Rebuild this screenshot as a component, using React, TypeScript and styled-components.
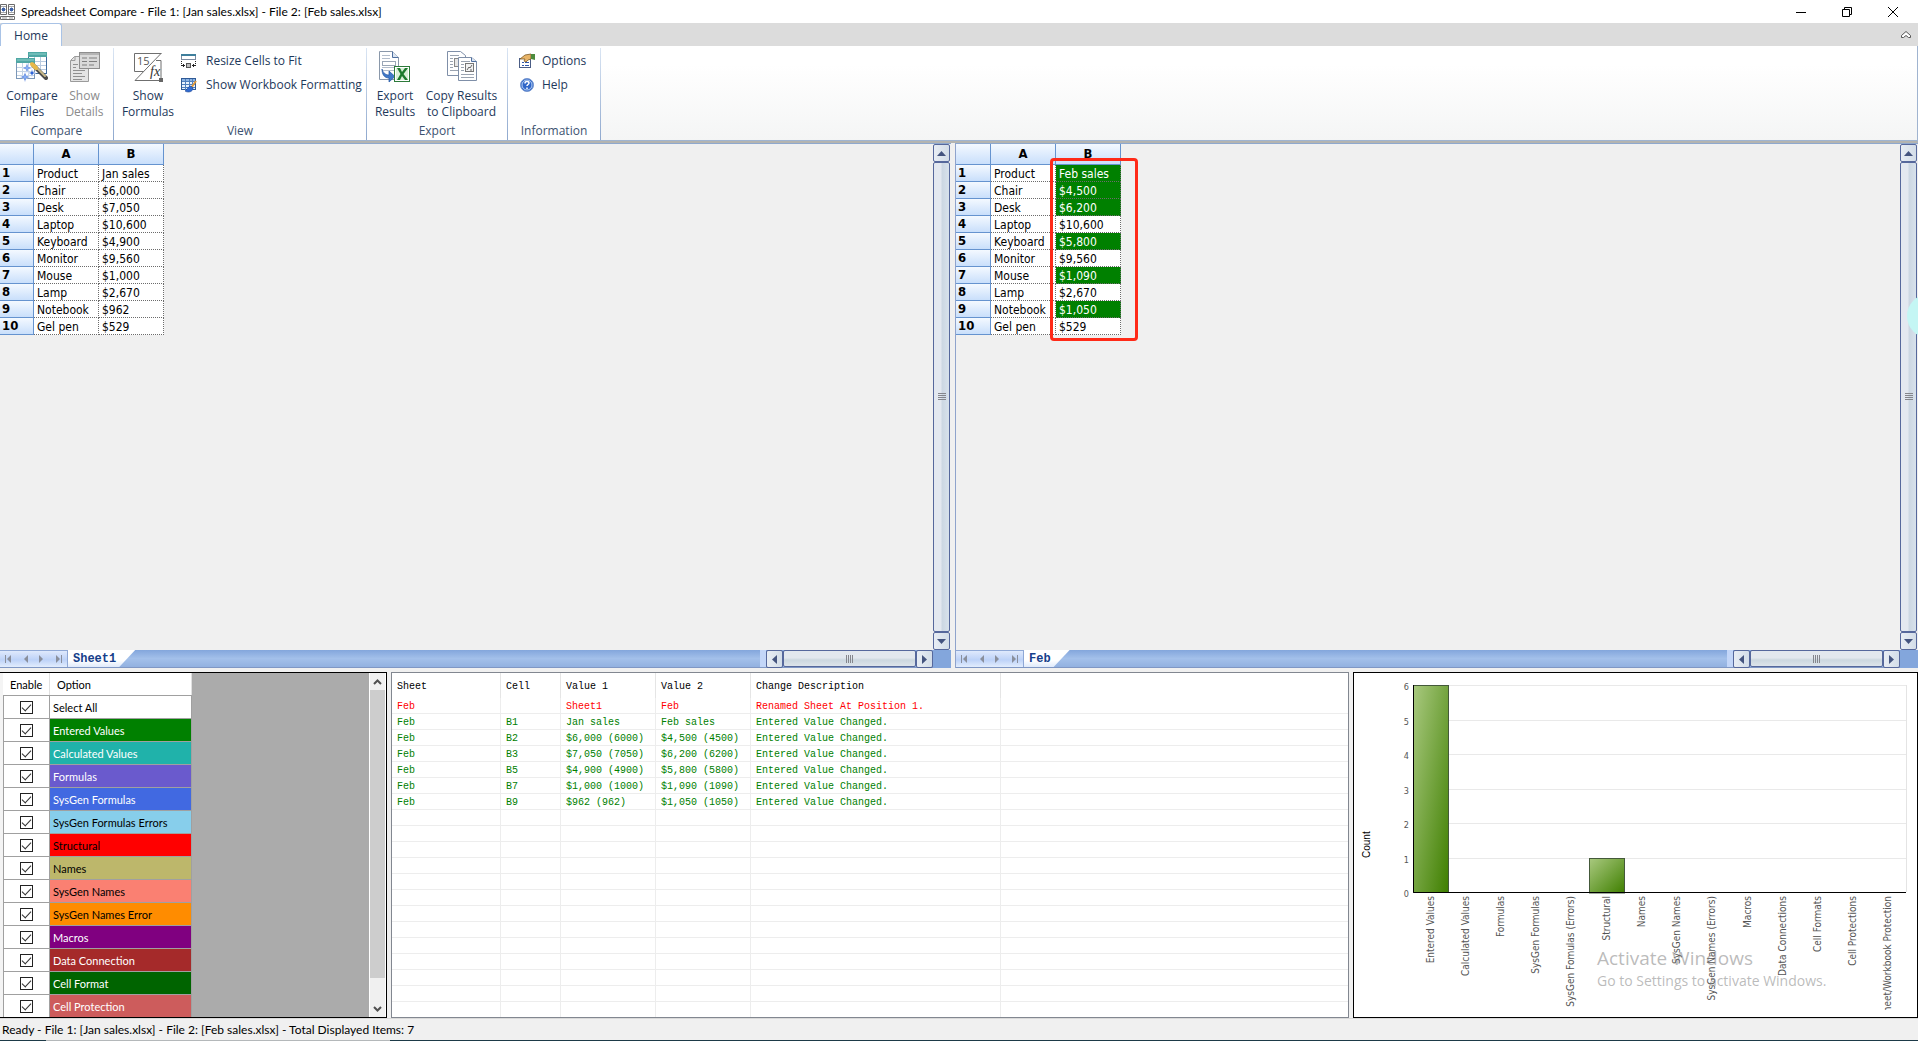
import React from "react";
import styled, { createGlobalStyle, css } from "styled-components";

const UI = `"Open Sans", "Noto Sans", sans-serif`;
const CAPTION = `Lato, "Open Sans", sans-serif`;
const GRID = `"DejaVu Sans Condensed", "DejaVu Sans", sans-serif`;
const MONO = `"Liberation Mono", monospace`;
const FORM = `Lato, "Liberation Sans", sans-serif`;

const GlobalStyle = createGlobalStyle`
  *, *::before, *::after { box-sizing: border-box; }
  body { margin: 0; background: #f0f0f0; font-family: ${UI}; font-size: 12px; color: #000; }
  button { font: inherit; color: inherit; background: none; border: 0; padding: 0; margin: 0; }
  svg { display: block; }
`;

const Window = styled.div`
  position: relative;
  display: flex;
  flex-direction: column;
  height: 100vh;
  overflow: hidden;
`;

/* ---------- title bar ---------- */
const TitleBar = styled.header`
  flex: none;
  display: flex;
  align-items: center;
  height: 23px;
  background: #fff;
`;
const Title = styled.h1`
  flex: 1;
  margin: 0;
  padding-left: 6px;
  font-family: ${CAPTION};
  font-size: 12px;
  font-weight: 400;
  line-height: 24px;
  white-space: nowrap;
`;
const WindowButtons = styled.div`
  display: flex;
  padding-right: 2px;
`;
const WindowButton = styled.button`
  display: grid;
  place-items: center;
  width: 46px;
  height: 20px;
`;

/* ---------- ribbon ---------- */
const TabStrip = styled.nav`
  flex: none;
  display: flex;
  justify-content: space-between;
  height: 24px;
  margin-bottom: -1px;
  background: #dcdcdc;
  border-bottom: 1px solid #a0b4d0;
`;
const RibbonTab = styled.button`
  width: 62px;
  height: 24px;
  background: #fff;
  border: 1px solid #a9c3e6;
  border-bottom: 0;
  border-radius: 3px 3px 0 0;
  color: #1e395b;
  line-height: 24px;
`;
const CollapseButton = styled.button`
  display: grid;
  place-items: center;
  width: 25px;
`;
const Ribbon = styled.section`
  flex: none;
  display: flex;
  height: 97px;
  padding-top: 2px;
  background: linear-gradient(#fff 20%, #f4f5f5);
  border-right: 1px solid #a0b4d0;
  border-bottom: 2px solid #b4b4b0;
  box-shadow: inset 0 -1px #a0b4d0;
`;
const Group = styled.div<{ $width: number }>`
  display: flex;
  flex-direction: column;
  width: ${(p) => p.$width}px;
  height: 92px;
  background: #fff;
  border-right: 1px solid;
  border-image: linear-gradient(#dbe6f4, #8ea8ce) 1;
  color: #1e395b;
`;
const GroupBody = styled.div<{ $pad: number }>`
  flex: 1;
  display: flex;
  align-items: flex-start;
  padding: 3px 0 0 ${(p) => p.$pad}px;
`;
const GroupLabel = styled.div`
  height: 18px;
  color: #3c5270;
  line-height: 18px;
  text-align: center;
`;
const BigButton = styled.button<{ $width: number }>`
  display: flex;
  flex-direction: column;
  align-items: center;
  gap: 5px;
  width: ${(p) => p.$width}px;
  line-height: 16px;
  white-space: nowrap;
  &:disabled { color: #8b8b8b; }
`;
const SmallList = styled.div`
  display: flex;
  flex-direction: column;
`;
const SmallButton = styled.button<{ $gap: number }>`
  display: flex;
  align-items: center;
  gap: ${(p) => p.$gap}px;
  height: 24px;
  padding-bottom: 5px;
  white-space: nowrap;
`;

/* ---------- workbook panes ---------- */
const Panes = styled.main`
  flex: 525 1 0;
  display: grid;
  grid-template-columns: 951fr 963fr;
  gap: 4px;
  min-height: 0;
`;
const Pane = styled.section<{ $edge?: boolean }>`
  display: grid;
  grid-template-columns: minmax(0, 1fr) 18px;
  grid-template-rows: minmax(0, 1fr) 18px;
  min-width: 0;
  border-top: 1px solid #8ea8ce;
  ${(p) => p.$edge && css`border-left: 1px solid #8fa3cc;`}
`;
const SheetArea = styled.div`
  position: relative;
  overflow: hidden;
`;
const Sheet = styled.table`
  table-layout: fixed;
  width: 0;
  border-spacing: 0;
  background: #fff;
  font-family: ${GRID};
  font-size: 12px;
`;
const HeadCell = styled.th<{ $width: number }>`
  width: ${(p) => p.$width}px;
  height: 21px;
  padding: 0;
  background: linear-gradient(#f4f9ff, #c9dffb);
  border: solid #6593cf;
  border-width: 0 1px 1px 0;
  font-size: 13px;
  line-height: 20px;
`;
const RowHead = styled.th`
  height: 17px;
  padding: 0 0 0 2px;
  background: linear-gradient(#f4f9ff, #c9dffb);
  border: solid #6593cf;
  border-width: 0 1px 1px 0;
  font-size: 13px;
  line-height: 16px;
  text-align: left;
`;
const Cell = styled.td<{ $changed?: boolean }>`
  height: 17px;
  padding: 2px 0 0 3px;
  border: dotted #6c6c6c;
  border-width: 0 1px 1px 0;
  line-height: 14px;
  white-space: nowrap;
  ${(p) => p.$changed && css`background: #008000; color: #fff;`}
`;
const RedFrame = styled.div`
  position: absolute;
  top: 14px;
  left: 94px;
  width: 88px;
  height: 183px;
  border: 3px solid #ff2a18;
  border-radius: 4px;
`;

const ScrollColumn = styled.div`
  display: flex;
  flex-direction: column;
`;
const scrollPiece = css`
  display: grid;
  place-items: center;
  border: 1px solid #56689c;
  border-radius: 2px;
`;
const ScrollButton = styled.button`
  ${scrollPiece}
  width: 17px;
  height: 18px;
  background: linear-gradient(90deg, #e8edf4, #d3dde8);
`;
const VerticalThumb = styled.div`
  ${scrollPiece}
  flex: 1;
  width: 17px;
  background: linear-gradient(90deg, #e3e8f0 45%, #ccd7e3 55%, #d8e2ec);
`;
const HorizontalThumb = styled.div`
  ${scrollPiece}
  flex: 1;
  background: linear-gradient(#e3e8ee 45%, #ccd7df 60%, #dde4ea);
`;
const TabBar = styled.div`
  display: flex;
  background: linear-gradient(#83a6dc, #a3c0ea 50%, #92b1e0);
  border-bottom: 1px solid #7f97c4;
`;
const TabNav = styled.div`
  display: flex;
  width: 68px;
  background: linear-gradient(#dfe9fc, #bdd2f8 55%, #e2edfd);
  border: solid #8fa8d6;
  border-width: 1px 1px 0 0;
`;
const NavButton = styled.button`
  flex: 1;
  display: grid;
  place-items: center;
`;
const SheetTab = styled.button`
  padding: 0 19px 0 5px;
  background: linear-gradient(#fff 60%, #dfeafb);
  clip-path: polygon(0 0, 100% 0, calc(100% - 16px) 100%, 0 100%);
  color: #153e8a;
  font-family: ${MONO};
  font-size: 12px;
  font-weight: 700;
  line-height: 16px;
`;
const HorizontalScroll = styled.div`
  display: flex;
  width: 173px;
  margin-left: auto;
  border-left: 6px solid #c3d6f8;
`;
const Corner = styled.div`
  background: #83a6dc;
`;

/* ---------- lower panels ---------- */
const Lower = styled.section`
  flex: 346 1 0;
  display: grid;
  grid-template-columns: 387fr 958fr 565fr;
  gap: 4px;
  min-height: 0;
  margin-top: 4px;
`;
const OptionsPanel = styled.div`
  display: flex;
  min-width: 0;
  overflow: hidden;
  background: #ababab;
  border: 1px solid #000;
  border-left: 0;
`;
const OptionsScroll = styled.div`
  flex: 1;
  overflow: hidden;
`;
const OptionsTable = styled.table`
  table-layout: fixed;
  width: 192px;
  border-spacing: 0;
  background: #fff;
  border-left: 3px solid #f4f4f4;
  font-family: ${FORM};
  font-size: 11px;
`;
const OptionsHead = styled.th<{ $width: number }>`
  width: ${(p) => p.$width}px;
  height: 23px;
  padding: 0 7px;
  border: solid #a0a0a0;
  border-width: 0 0 1px 0;
  box-shadow: inset -1px 0 #e0e0e0;
  font-weight: 400;
  text-align: left;
`;
const TickCell = styled.td`
  height: 23px;
  padding: 0;
  border: solid #a0a0a0;
  border-width: 0 1px 1px 1px;
`;
const OptionCell = styled.td<{ $bg: string; $fg: string }>`
  padding: 0 0 0 3px;
  background: ${(p) => p.$bg};
  border: solid #a0a0a0;
  border-width: 0 1px 1px 0;
  color: ${(p) => p.$fg};
  label { display: block; }
`;
const Tick = styled.input`
  appearance: none;
  display: grid;
  place-items: center;
  width: 13px;
  height: 13px;
  margin: 0 auto;
  background: #fff;
  border: 1px solid #222;
  &:checked::after {
    content: "";
    width: 9px;
    height: 5px;
    margin-top: -2px;
    border: solid #333;
    border-width: 0 0 1px 1px;
    transform: rotate(-47deg);
  }
`;
const PlainScroll = styled.div`
  display: flex;
  flex-direction: column;
  width: 17px;
  background: #f0f0f0;
  border: solid #fff;
  border-width: 0 1px;
`;
const PlainScrollButton = styled.button`
  display: grid;
  place-items: center;
  height: 17px;
`;
const PlainThumb = styled.div`
  flex: 1;
  margin-bottom: 22px;
  background: #cdcdcd;
`;

const ResultsPanel = styled.div`
  min-width: 0;
  overflow: hidden;
  background: #fff;
  border: 1px solid #828790;
`;
const Results = styled.table`
  table-layout: fixed;
  width: 100%;
  border-spacing: 0;
  font-family: ${MONO};
  font-size: 10px;
  white-space: pre;
`;
const ResultsHead = styled.th<{ $width?: number }>`
  ${(p) => p.$width && css`width: ${p.$width}px;`}
  height: 25px;
  padding: 2px 0 0 5px;
  border-right: 1px solid #e5e5e5;
  font-weight: 400;
  text-align: left;
  &:last-child { border-right: 0; }
`;
const ResultsCell = styled.td`
  height: 16px;
  padding: 2px 0 0 5px;
  border: solid #ededed;
  border-width: 0 1px 1px 0;
  line-height: 13px;
  &:last-child { border-right: 0; }
`;
const ResultsRow = styled.tr<{ $color: string }>`
  color: ${(p) => p.$color};
`;

const ChartPanel = styled.div`
  position: relative;
  min-width: 0;
  background: #fff;
  border: 1px solid #000;
  svg { width: 100%; height: 100%; }
`;
const Watermark = styled.div`
  position: absolute;
  left: 243px;
  top: 272px;
  color: rgba(120, 120, 120, 0.5);
  white-space: nowrap;
  p { margin: 0; }
  p:first-child { font-size: 19px; line-height: 26px; }
  p:last-child { font-size: 14px; line-height: 20px; }
`;

const StatusBar = styled.footer`
  flex: none;
  height: 22px;
  padding: 0 2px;
  border-top: 1px solid #dadada;
  font-family: ${CAPTION};
  line-height: 22px;
  white-space: nowrap;
`;
const DesktopEdge = styled.div`
  flex: none;
  height: 1px;
  background: linear-gradient(90deg, #1d3a48 46px, #b4b8ba 46px 390px, #1d3a48 390px);
`;
const Bubble = styled.div`
  position: absolute;
  top: 294px;
  right: -33px;
  width: 44px;
  height: 44px;
  background: #c4f6f4;
  border-radius: 50%;
`;

/* ---------- icons ---------- */
const AppIcon = () => (
  <svg width="15" height="16" viewBox="0 0 15 16">
    <path d="M.5 .5h6v10h-6zM8.500 .5h6v10h-6zM.5 12.500h14v3h-14z" fill="#fff" stroke="#6b6b6b" />
    <path d="M1 2.500h5M1 8.500h5M9 2.500h5M9 8.500h5" stroke="#aaa" />
    <path d="M1.500 5.500h4M3.500 3.500v4M2 4l3 3M5 4l-3 3M9.500 5.500h4M11.500 3.500v4M10 4l3 3M13 4l-3 3" stroke="#3d62a8" />
    <path d="M2 14h5M9 14h4" stroke="#999" />
  </svg>
);

const CompareIcon = () => (
  <svg width="32" height="32" viewBox="0 0 32 32">
    <rect x="12.500" y="1.500" width="18" height="21" fill="#fff" stroke="#3f6a9c" />
    <rect x="12" y="1" width="19" height="5" fill="#4fa7a4" />
    <path d="M13 3h17" stroke="#8fd0cb" />
    <path d="M13 10.500h17M13 14.500h17M13 18.500h17M18.500 6v16M24.500 6v16" stroke="#b9cbe0" />
    <rect x=".5" y="7.500" width="18" height="20" fill="#fff" stroke="#7b97b8" />
    <rect x="0" y="7" width="19" height="5" fill="#4fa7a4" />
    <path d="M1 9h17" stroke="#8fd0cb" />
    <path d="M1 16.500h17M1 20.500h17M1 24.500h17M6.500 12v15M12.500 12v15" stroke="#c3d2e3" />
    <path d="M17 14l13 13" stroke="#4a4a4a" strokeWidth="4" strokeLinecap="round" />
    <path d="M17 13l12 12" stroke="#c7b888" strokeWidth="2" strokeLinecap="round" />
    <path d="M16 13l4 4" stroke="#e7b94a" strokeWidth="4" strokeLinecap="round" />
    <path d="M11 12l1.200 3.800 3.800 1.200-3.800 1.200L11 22l-1.200-3.800L6 17l3.800-1.200zM16 18l1 3 3 1-3 1-1 3-1-3-3-1 3-1zM9 21l1.300 3.700L14 26l-3.700 1.300L9 31l-1.300-3.700L4 26l3.700-1.300z" fill="#2f66d8" stroke="#fff" strokeWidth=".5" />
    <path d="M11 15v4M9 17h4M9 24v4M7 26h4" stroke="#a9c8fb" />
  </svg>
);

const DetailsIcon = () => (
  <svg width="32" height="32" viewBox="0 0 32 32">
    <path d="M1.500 9.500l4-4h14v25h-18z" fill="#e4e4e4" stroke="#9b9b9b" />
    <path d="M4 13.500h5M4 16.500h3M4 19.500h12M4 22.500h9M4 25.500h12M4 28.500h9" stroke="#8f8f8f" />
    <rect x="10.500" y="1.500" width="20" height="16" fill="#dadada" stroke="#8e8e8e" />
    <path d="M11 3h19" stroke="#b5b5b5" strokeWidth="2" />
    <path d="M13 7h5M20 7h8M13 10.500h5M20 10.500h8M13 14h5M20 14h5" stroke="#7f7f7f" />
    <path d="M2 9.500h4v-4" fill="none" stroke="#9b9b9b" />
  </svg>
);

const FormulasIcon = () => (
  <svg width="32" height="32" viewBox="0 0 32 32">
    <path d="M29.500 2.500h-27v18h9M29 2.500L3 29.500h26v-20h-5" fill="none" stroke="#6f6f6f" />
    <text x="5" y="14" fontFamily="Open Sans" fontSize="11" fill="#555">15</text>
    <text x="18" y="25" fontFamily="Liberation Serif" fontStyle="italic" fontSize="14" fill="#333">fx</text>
    <rect x="27" y="27" width="4" height="4" fill="#666" />
  </svg>
);

const ResizeIcon = () => (
  <svg width="16" height="16" viewBox="0 0 16 16">
    <rect x=".5" y="1.500" width="14" height="5" fill="#fff" stroke="#7b8aa0" />
    <path d="M0 2h15" stroke="#3f7f9c" strokeWidth="2" />
    <path d="M.5 8v6M14.500 8v6" stroke="#222" strokeDasharray="1 1" />
    <path d="M1 12.500h3M11 12.500h3M2.500 11v3M12.500 11v3" stroke="#222" />
    <rect x="5.500" y="10.500" width="4" height="4" fill="#bbb" stroke="#555" />
  </svg>
);

const FormattingIcon = () => (
  <svg width="16" height="16" viewBox="0 0 16 16">
    <rect x=".5" y="1.500" width="14" height="11" fill="#e9f2fd" stroke="#2f5a96" />
    <path d="M1 3h13" stroke="#8db4e3" strokeWidth="2" />
    <path d="M1 4.500h13M1 7.500h13M1 10.500h13M4.500 2v11M8.500 2v11M11.500 2v11" stroke="#4f7fbd" />
    <path d="M15 4l-5 7" stroke="#e09a3c" strokeWidth="2" />
    <path d="M10 9c-3 0-3 3-6 5 3 2 8 1 8-3z" fill="#2f6ad0" stroke="#1c4590" strokeWidth=".6" />
  </svg>
);

const ExportIcon = () => (
  <svg width="32" height="32" viewBox="0 0 32 32">
    <path d="M.5 .5h13l6 6v22h-19z" fill="#fff" stroke="#8a98aa" />
    <path d="M13.500 .5v6h6" fill="#dbe5f2" stroke="#4f6f9f" />
    <path d="M3 4.500h8M3 7.500h8M3 16.500h13M3 19.500h13" stroke="#b3bdcb" />
    <rect x="3.500" y="10.500" width="13" height="4" fill="#fff" stroke="#9aa6b6" />
    <path d="M3 18c1 4 4 6 7 6v-4l6 5.500-6 5.500v-4c-5 0-7-4-7-9z" fill="#3f78c8" stroke="#2456a0" strokeWidth=".7" />
    <rect x="15.500" y="15.500" width="15" height="15" fill="#fff" stroke="#2d7a3a" />
    <rect x="17" y="17" width="12" height="12" fill="#d9efd8" />
    <path d="M18 17h3l2 4 3-4h3l-4.500 6 4.500 6h-3l-3-4-2 4h-3l3.500-6z" fill="#1d7a2d" />
  </svg>
);

const CopyIcon = () => (
  <svg width="32" height="32" viewBox="0 0 32 32">
    <path d="M1.500 .5h13l5 4v20h-18z" fill="#fff" stroke="#7f8fa8" />
    <path d="M4 4.500h9M4 7.500h3M4 10.500h3M4 13.500h3M4 16.500h3M4 19.500h9" stroke="#9aa3b0" />
    <rect x="8.500" y="7.500" width="7" height="8" fill="#e6e6e6" stroke="#888" />
    <path d="M12.500 6.500h13l5 4v19h-18z" fill="#fff" stroke="#7f8fa8" />
    <path d="M25.500 6.500v4h5" fill="#dbe5f2" stroke="#4f6f9f" />
    <path d="M15 10.500h9M15 13.500h3M15 16.500h3M15 19.500h3M15 23.500h13M15 26.500h13" stroke="#9aa3b0" />
    <rect x="19.500" y="12.500" width="8" height="8" fill="#f2f2f2" stroke="#777" />
    <path d="M21 19l2-3 1 1 2-3M24 19l2 0" fill="none" stroke="#666" />
  </svg>
);

const OptionsIcon = () => (
  <svg width="16" height="16" viewBox="0 0 16 16">
    <rect x=".5" y="5.500" width="11" height="9" fill="#fff" stroke="#4b5d85" />
    <path d="M3 9.500h2M3 12.500h2M6 9.500h4M6 12.500h4" stroke="#2f56a8" />
    <path d="M1 6l5-4 6-1v5l-3 1-2 2-2-1 1-2z" fill="#e8b468" stroke="#7c5a24" strokeWidth=".8" />
    <path d="M12 1h4v6l-4-1z" fill="#4d8b3d" />
  </svg>
);

const HelpIcon = () => (
  <svg width="16" height="16" viewBox="0 0 16 16">
    <circle cx="8" cy="8" r="6.500" fill="#2f66c8" stroke="#7797cf" />
    <circle cx="8" cy="8" r="5" fill="none" stroke="#b9d2f5" />
    <path d="M6 6.500c0-3 4-2.500 4-.5 0 1.500-2 1.500-2 3M8 10.500v1.500" fill="none" stroke="#fff" strokeWidth="1.500" />
  </svg>
);

type Direction = "up" | "down" | "left" | "right";
const trianglePaths: Record<Direction, string> = {
  up: "M0 7h9L4.500 2z",
  down: "M0 2h9L4.500 7z",
  left: "M7 0v9L2 4.500z",
  right: "M2 0v9l5-4.500z",
};
const Triangle = ({ to, color = "#44547f" }: { to: Direction; color?: string }) => (
  <svg width="9" height="9" viewBox="0 0 9 9">
    <path d={trianglePaths[to]} fill={color} />
  </svg>
);
const NavGlyph = ({ to, bar }: { to: "left" | "right"; bar?: boolean }) => (
  <svg width="9" height="8" viewBox="0 0 9 8">
    <path d={to === "left" ? "M7 0v8L3 4z" : "M2 0v8l4-4z"} fill="#8a8f9c" />
    {bar && <path d={to === "left" ? "M1.500 0v8" : "M7.500 0v8"} stroke="#8a8f9c" />}
  </svg>
);
const Grip = ({ vertical }: { vertical?: boolean }) => (
  <svg width="8" height="8" viewBox="0 0 8 8">
    <path
      d={vertical ? "M0 .5h8M0 2.500h8M0 4.500h8M0 6.500h8" : "M.5 0v8M2.500 0v8M4.500 0v8M6.500 0v8"}
      stroke="#85868c"
    />
  </svg>
);
const Chevron = ({ to }: { to: "up" | "down" }) => (
  <svg width="9" height="6" viewBox="0 0 9 6">
    <path d={to === "up" ? "M1 5l3.500-3.500L8 5" : "M1 1l3.500 3.500L8 1"} fill="none" stroke="#505050" strokeWidth="2" />
  </svg>
);

/* ---------- data ---------- */
const products = ["Chair", "Desk", "Laptop", "Keyboard", "Monitor", "Mouse", "Lamp", "Notebook", "Gel pen"];
const janSales = ["$6,000", "$7,050", "$10,600", "$4,900", "$9,560", "$1,000", "$2,670", "$962", "$529"];
const febSales = ["$4,500", "$6,200", "$10,600", "$5,800", "$9,560", "$1,090", "$2,670", "$1,050", "$529"];

const options: [string, string, string][] = [
  ["Select All", "#ffffff", "#000"],
  ["Entered Values", "#008000", "#fff"],
  ["Calculated Values", "#20b2aa", "#fff"],
  ["Formulas", "#6a5acd", "#fff"],
  ["SysGen Formulas", "#4169e1", "#fff"],
  ["SysGen Formulas Errors", "#87ceeb", "#000"],
  ["Structural", "#ff0000", "#000"],
  ["Names", "#bdb76b", "#000"],
  ["SysGen Names", "#fa8072", "#000"],
  ["SysGen Names Error", "#ff8c00", "#000"],
  ["Macros", "#800080", "#fff"],
  ["Data Connection", "#a52a2a", "#fff"],
  ["Cell Format", "#006400", "#fff"],
  ["Cell Protection", "#cd5c5c", "#fff"],
];

const changes = [
  ["Feb", "", "Sheet1", "Feb", "Renamed Sheet At Position 1."],
  ["Feb", "B1", "Jan sales", "Feb sales", "Entered Value Changed."],
  ["Feb", "B2", "$6,000 (6000)", "$4,500 (4500)", "Entered Value Changed."],
  ["Feb", "B3", "$7,050 (7050)", "$6,200 (6200)", "Entered Value Changed."],
  ["Feb", "B5", "$4,900 (4900)", "$5,800 (5800)", "Entered Value Changed."],
  ["Feb", "B7", "$1,000 (1000)", "$1,090 (1090)", "Entered Value Changed."],
  ["Feb", "B9", "$962 (962)", "$1,050 (1050)", "Entered Value Changed."],
];
const emptyRows = Array.from({ length: 13 }, () => ["", "", "", "", ""]);

const chartData: [string, number][] = [
  ["Entered Values", 6],
  ["Calculated Values", 0],
  ["Formulas", 0],
  ["SysGen Formulas", 0],
  ["SysGen Fomulas (Errors)", 0],
  ["Structural", 1],
  ["Names", 0],
  ["SysGen Names", 0],
  ["SysGen Names (Errors)", 0],
  ["Macros", 0],
  ["Data Connections", 0],
  ["Cell Formats", 0],
  ["Cell Protections", 0],
  ["Sheet/Workbook Protection", 0],
];

/* ---------- parts ---------- */
interface WorkbookProps {
  tab: string;
  heading: string;
  values: string[];
  compareWith?: string[];
  headWidth: number;
}
const Workbook = ({ tab, heading, values, compareWith, headWidth }: WorkbookProps) => {
  const rows = [["Product", heading], ...products.map((name, i) => [name, values[i]])];
  const isChanged = (i: number) => !!compareWith && (i === 0 || compareWith[i - 1] !== values[i - 1]);
  return (
    <Pane $edge={!!compareWith}>
      <SheetArea>
        <Sheet>
          <thead>
            <tr>
              <HeadCell $width={headWidth} aria-label="Row" />
              <HeadCell $width={65}>A</HeadCell>
              <HeadCell $width={65}>B</HeadCell>
            </tr>
          </thead>
          <tbody>
            {rows.map(([name, value], i) => (
              <tr key={name}>
                <RowHead>{i + 1}</RowHead>
                <Cell>{name}</Cell>
                <Cell $changed={isChanged(i)}>{value}</Cell>
              </tr>
            ))}
          </tbody>
        </Sheet>
        {compareWith && <RedFrame />}
      </SheetArea>
      <ScrollColumn>
        <ScrollButton aria-label="Scroll up"><Triangle to="up" /></ScrollButton>
        <VerticalThumb><Grip vertical /></VerticalThumb>
        <ScrollButton aria-label="Scroll down"><Triangle to="down" /></ScrollButton>
      </ScrollColumn>
      <TabBar>
        <TabNav>
          <NavButton aria-label="First sheet"><NavGlyph to="left" bar /></NavButton>
          <NavButton aria-label="Previous sheet"><NavGlyph to="left" /></NavButton>
          <NavButton aria-label="Next sheet"><NavGlyph to="right" /></NavButton>
          <NavButton aria-label="Last sheet"><NavGlyph to="right" bar /></NavButton>
        </TabNav>
        <SheetTab>{tab}</SheetTab>
        <HorizontalScroll>
          <ScrollButton aria-label="Scroll left"><Triangle to="left" /></ScrollButton>
          <HorizontalThumb><Grip /></HorizontalThumb>
          <ScrollButton aria-label="Scroll right"><Triangle to="right" /></ScrollButton>
        </HorizontalScroll>
      </TabBar>
      <Corner />
    </Pane>
  );
};

const PLOT = { left: 59, right: 552, top: 12, bottom: 219 };
const Chart = () => {
  const step = (PLOT.right - PLOT.left) / chartData.length;
  const unit = (PLOT.bottom - PLOT.top) / 6;
  return (
    <svg viewBox="0 0 563 344" role="img" aria-label="Count of changes by type">
      <defs>
        <linearGradient id="bar" x1="0" y1="0" x2="1" y2="1">
          <stop offset="0" stopColor="#a9c97f" />
          <stop offset="1" stopColor="#3f7f00" />
        </linearGradient>
        <clipPath id="labels"><rect x="0" y="0" width="563" height="337" /></clipPath>
      </defs>
      {[0, 1, 2, 3, 4, 5, 6].map((n) => {
        const y = Math.round(PLOT.bottom - n * unit) + 0.5;
        return (
          <g key={n}>
            <path d={`M${PLOT.left} ${y}H${PLOT.right}`} stroke="#e9e9e9" />
            <text x="55" y={y + 4} textAnchor="end" fontFamily="DejaVu Sans Condensed" fontSize="9" fill="#555">{n}</text>
          </g>
        );
      })}
      <path d={`M${PLOT.right + 0.5} ${PLOT.top}V${PLOT.bottom}`} stroke="#e4e4e4" />
      {chartData.map(([name, count], i) =>
        count ? (
          <rect
            key={name}
            x={Math.round(PLOT.left + i * step) + 0.5}
            y={Math.round(PLOT.bottom - count * unit) + 0.5}
            width={35}
            height={count * unit}
            fill="url(#bar)"
            stroke="#44593a"
          />
        ) : null
      )}
      <path d={`M${PLOT.left + 0.5} ${PLOT.top}V${PLOT.bottom + 0.5}H${PLOT.right}`} fill="none" stroke="#000" />
      <g clipPath="url(#labels)" fontFamily="DejaVu Sans Condensed" fontSize="10" fill="#555" textAnchor="end">
        {chartData.map(([name], i) => (
          <text key={name} transform={`translate(${Math.round(PLOT.left + (i + 0.5) * step) + 3} 223) rotate(-90)`}>
            {name}
          </text>
        ))}
      </g>
      <text transform="translate(16 185) rotate(-90)" fontFamily="Liberation Sans" fontSize="10">Count</text>
    </svg>
  );
};

export default function App() {
  return (
    <Window>
      <GlobalStyle />
      <TitleBar>
        <AppIcon />
        <Title>Spreadsheet Compare - File 1: [Jan sales.xlsx] - File 2: [Feb sales.xlsx]</Title>
        <WindowButtons>
          <WindowButton aria-label="Minimize">
            <svg width="10" height="10"><path d="M0 5.500h10" stroke="#000" /></svg>
          </WindowButton>
          <WindowButton aria-label="Restore">
            <svg width="10" height="10"><path d="M.5 2.500h7v7h-7zM2.500 2.500v-2h7v7h-2" fill="none" stroke="#000" /></svg>
          </WindowButton>
          <WindowButton aria-label="Close">
            <svg width="10" height="10"><path d="M0 0l10 10M10 0L0 10" stroke="#000" /></svg>
          </WindowButton>
        </WindowButtons>
      </TitleBar>

      <TabStrip>
        <RibbonTab>Home</RibbonTab>
        <CollapseButton aria-label="Collapse ribbon">
          <svg width="10" height="8" viewBox="0 0 10 8">
            <path d="M.5 4.500L5 .5l4.500 4v2h-2L5 4.500l-2.500 2h-2z" fill="#fff" stroke="#555" />
          </svg>
        </CollapseButton>
      </TabStrip>

      <Ribbon>
        <Group $width={114}>
          <GroupBody $pad={4}>
            <BigButton $width={56}><CompareIcon /><span>Compare<br />Files</span></BigButton>
            <BigButton $width={49} disabled><DetailsIcon /><span>Show<br />Details</span></BigButton>
          </GroupBody>
          <GroupLabel>Compare</GroupLabel>
        </Group>
        <Group $width={253}>
          <GroupBody $pad={1}>
            <BigButton $width={66}><FormulasIcon /><span>Show<br />Formulas</span></BigButton>
            <SmallList>
              <SmallButton $gap={9}><ResizeIcon />Resize Cells to Fit</SmallButton>
              <SmallButton $gap={9}><FormattingIcon />Show Workbook Formatting</SmallButton>
            </SmallList>
          </GroupBody>
          <GroupLabel>View</GroupLabel>
        </Group>
        <Group $width={141}>
          <GroupBody $pad={3}>
            <BigButton $width={50}><ExportIcon /><span>Export<br />Results</span></BigButton>
            <BigButton $width={83}><CopyIcon /><span>Copy Results<br />to Clipboard</span></BigButton>
          </GroupBody>
          <GroupLabel>Export</GroupLabel>
        </Group>
        <Group $width={93}>
          <GroupBody $pad={11}>
            <SmallList>
              <SmallButton $gap={7}><OptionsIcon />Options</SmallButton>
              <SmallButton $gap={7}><HelpIcon />Help</SmallButton>
            </SmallList>
          </GroupBody>
          <GroupLabel>Information</GroupLabel>
        </Group>
      </Ribbon>

      <Panes>
        <Workbook tab="Sheet1" heading="Jan sales" values={janSales} headWidth={34} />
        <Workbook tab="Feb" heading="Feb sales" values={febSales} compareWith={janSales} headWidth={35} />
      </Panes>

      <Lower>
        <OptionsPanel>
          <OptionsScroll>
            <OptionsTable>
              <thead>
                <tr>
                  <OptionsHead $width={47}>Enable</OptionsHead>
                  <OptionsHead $width={142}>Option</OptionsHead>
                </tr>
              </thead>
              <tbody>
                {options.map(([name, bg, fg], i) => (
                  <tr key={name}>
                    <TickCell><Tick type="checkbox" id={`option-${i}`} defaultChecked /></TickCell>
                    <OptionCell $bg={bg} $fg={fg}><label htmlFor={`option-${i}`}>{name}</label></OptionCell>
                  </tr>
                ))}
              </tbody>
            </OptionsTable>
          </OptionsScroll>
          <PlainScroll>
            <PlainScrollButton aria-label="Scroll up"><Chevron to="up" /></PlainScrollButton>
            <PlainThumb />
            <PlainScrollButton aria-label="Scroll down"><Chevron to="down" /></PlainScrollButton>
          </PlainScroll>
        </OptionsPanel>

        <ResultsPanel>
          <Results>
            <thead>
              <tr>
                <ResultsHead $width={109}>Sheet</ResultsHead>
                <ResultsHead $width={60}>Cell</ResultsHead>
                <ResultsHead $width={95}>Value 1</ResultsHead>
                <ResultsHead $width={95}>Value 2</ResultsHead>
                <ResultsHead $width={250}>Change Description</ResultsHead>
                <ResultsHead aria-label="Filler" />
              </tr>
            </thead>
            <tbody>
              {[...changes, ...emptyRows].map((row, i) => (
                <ResultsRow key={i} $color={i === 0 ? "#ff0000" : "#008000"}>
                  {row.map((text, j) => <ResultsCell key={j}>{text}</ResultsCell>)}
                  <ResultsCell />
                </ResultsRow>
              ))}
            </tbody>
          </Results>
        </ResultsPanel>

        <ChartPanel>
          <Chart />
          <Watermark>
            <p>Activate Windows</p>
            <p>Go to Settings to activate Windows.</p>
          </Watermark>
        </ChartPanel>
      </Lower>

      <StatusBar>Ready - File 1: [Jan sales.xlsx] - File 2: [Feb sales.xlsx] - Total Displayed Items: 7</StatusBar>
      <DesktopEdge />
      <Bubble />
    </Window>
  );
}
